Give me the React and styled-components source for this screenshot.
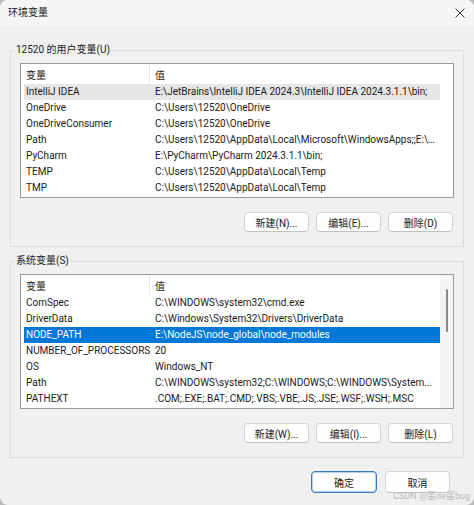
import React from "react";
import styled, { createGlobalStyle } from "styled-components";

const GlobalStyle = createGlobalStyle`
  html, body {
    margin: 0;
    padding: 0;
    background: #b9b9b9;
  }
  body {
    font-family: Roboto, "Noto Sans CJK SC", sans-serif;
  }
`;

const userVars = [
  ["IntelliJ IDEA", "E:\\JetBrains\\IntelliJ IDEA 2024.3\\IntelliJ IDEA 2024.3.1.1\\bin;", "idle"],
  ["OneDrive", "C:\\Users\\12520\\OneDrive"],
  ["OneDriveConsumer", "C:\\Users\\12520\\OneDrive"],
  ["Path", "C:\\Users\\12520\\AppData\\Local\\Microsoft\\WindowsApps;;E:\\J..."],
  ["PyCharm", "E:\\PyCharm\\PyCharm 2024.3.1.1\\bin;"],
  ["TEMP", "C:\\Users\\12520\\AppData\\Local\\Temp"],
  ["TMP", "C:\\Users\\12520\\AppData\\Local\\Temp"],
];

const systemVars = [
  ["ComSpec", "C:\\WINDOWS\\system32\\cmd.exe"],
  ["DriverData", "C:\\Windows\\System32\\Drivers\\DriverData"],
  ["NODE_PATH", "E:\\NodeJS\\node_global\\node_modules", "focus"],
  ["NUMBER_OF_PROCESSORS", "20"],
  ["OS", "Windows_NT"],
  ["Path", "C:\\WINDOWS\\system32;C:\\WINDOWS;C:\\WINDOWS\\System..."],
  ["PATHEXT", ".COM;.EXE;.BAT;.CMD;.VBS;.VBE;.JS;.JSE;.WSF;.WSH;.MSC"],
];

const Window = styled.div`
  position: relative;
  width: 474px;
  height: 505px;
  box-sizing: border-box;
  background: #f0f0f0;
  border-radius: 8px;
  overflow: hidden;
  font-size: 10px;
  color: #1a1a1a;
  display: flex;
  flex-direction: column;
`;

const TitleBar = styled.div`
  height: 26px;
  flex-shrink: 0;
  display: flex;
  align-items: center;
  justify-content: space-between;
  padding: 0 9px 0 8px;
  background: #f5f5f5;
`;

const Title = styled.span`
  font-size: 10px;
  line-height: 16px;
`;

const Group = styled.fieldset`
  margin: ${(p) => p.$top}px 10px 0;
  padding: 5px 9px 14px;
  border: 1px solid #dcdcdc;
  min-width: 0;
`;

const Legend = styled.legend`
  margin-left: -6px;
  padding: 0 2px;
  line-height: 16px;
  font-size: 10px;
`;

const ListBox = styled.div`
  display: flex;
  height: 135px;
  box-sizing: border-box;
  border: 1px solid #9a9a9a;
  background: #fff;
`;

const Table = styled.div`
  flex: 1;
  min-width: 0;
  display: flex;
  flex-direction: column;
  padding-left: 3px;
`;

const Header = styled.div`
  display: grid;
  grid-template-columns: 126px 1fr;
  height: 20px;
  flex-shrink: 0;
`;

const HeadCell = styled.div`
  display: flex;
  align-items: center;
  padding-left: ${(p) => (p.$first ? 2 : 5)}px;
  border-right: ${(p) => (p.$first ? "1px solid #e8e8e8" : "none")};
`;

const Row = styled.div`
  display: grid;
  grid-template-columns: 126px 1fr;
  height: 16px;
  line-height: 16px;
  background: ${(p) =>
    p.$sel === "focus" ? "#0078d7" : p.$sel === "idle" ? "#e6e6e6" : "transparent"};
  color: ${(p) => (p.$sel === "focus" ? "#fff" : "#1a1a1a")};
`;

const NameCell = styled.div`
  padding-left: 2px;
  white-space: nowrap;
`;

const ValueCell = styled.div`
  padding-left: 5px;
  white-space: nowrap;
  overflow: hidden;
  text-overflow: ellipsis;
`;

const ScrollTrack = styled.div`
  width: 13px;
  flex-shrink: 0;
  display: flex;
  flex-direction: column;
  align-items: center;
  padding-top: 14px;
  box-sizing: border-box;
  background: ${(p) => (p.$show ? "#f3f3f3" : "transparent")};
`;

const Thumb = styled.div`
  width: 2px;
  height: 43px;
  border-radius: 1px;
  background: #8a8a8a;
`;

const ButtonRow = styled.div`
  display: flex;
  justify-content: flex-end;
  gap: ${(p) => p.$gap || 7}px;
  margin-top: ${(p) => p.$top || 14}px;
  padding-right: ${(p) => p.$right || 1}px;
`;

const Button = styled.button`
  width: ${(p) => p.$w || 65}px;
  height: ${(p) => p.$h || 20}px;
  padding: 0;
  box-sizing: border-box;
  font-family: inherit;
  font-size: 10px;
  color: #1a1a1a;
  background: #fdfdfd;
  border: 1px solid ${(p) => (p.$default ? "#3a78b8" : "#d3d3d3")};
  border-bottom-color: ${(p) => (p.$default ? "#3a78b8" : "#c2c2c2")};
  box-shadow: ${(p) => (p.$default ? "inset 0 0 0 1px #b7d2ec" : "none")};
  border-radius: 4px;
`;

const Watermark = styled.span`
  position: absolute;
  right: 4px;
  bottom: 4px;
  font-size: 9px;
  line-height: 9px;
  color: #b8b8b8;
`;

const CloseIcon = () => (
  <svg width="10" height="10" viewBox="0 0 10 10">
    <path d="M0.5 0.5 L9.5 9.5 M9.5 0.5 L0.5 9.5" stroke="#333" strokeWidth="1" />
  </svg>
);

const VarList = ({ rows, scroll }) => (
  <ListBox>
    <Table>
      <Header>
        <HeadCell $first>变量</HeadCell>
        <HeadCell>值</HeadCell>
      </Header>
      {rows.map(([name, value, sel]) => (
        <Row key={name + value} $sel={sel}>
          <NameCell>{name}</NameCell>
          <ValueCell>{value}</ValueCell>
        </Row>
      ))}
    </Table>
    <ScrollTrack $show={scroll}>{scroll && <Thumb />}</ScrollTrack>
  </ListBox>
);

const App = () => (
  <>
    <GlobalStyle />
    <Window>
      <TitleBar>
        <Title>环境变量</Title>
        <CloseIcon />
      </TitleBar>

      <Group $top={16}>
        <Legend>12520 的用户变量(U)</Legend>
        <VarList rows={userVars} />
        <ButtonRow>
          <Button>新建(N)...</Button>
          <Button>编辑(E)...</Button>
          <Button>删除(D)</Button>
        </ButtonRow>
      </Group>

      <Group $top={6}>
        <Legend>系统变量(S)</Legend>
        <VarList rows={systemVars} scroll />
        <ButtonRow>
          <Button>新建(W)...</Button>
          <Button>编辑(I)...</Button>
          <Button>删除(L)</Button>
        </ButtonRow>
      </Group>

      <ButtonRow $top={13} $right={24} $gap={8}>
        <Button $w={66} $h={22} $default>
          确定
        </Button>
        <Button $h={22}>取消</Button>
      </ButtonRow>

      <Watermark>CSDN @蛋de蛋bug</Watermark>
    </Window>
  </>
);

export default App;
